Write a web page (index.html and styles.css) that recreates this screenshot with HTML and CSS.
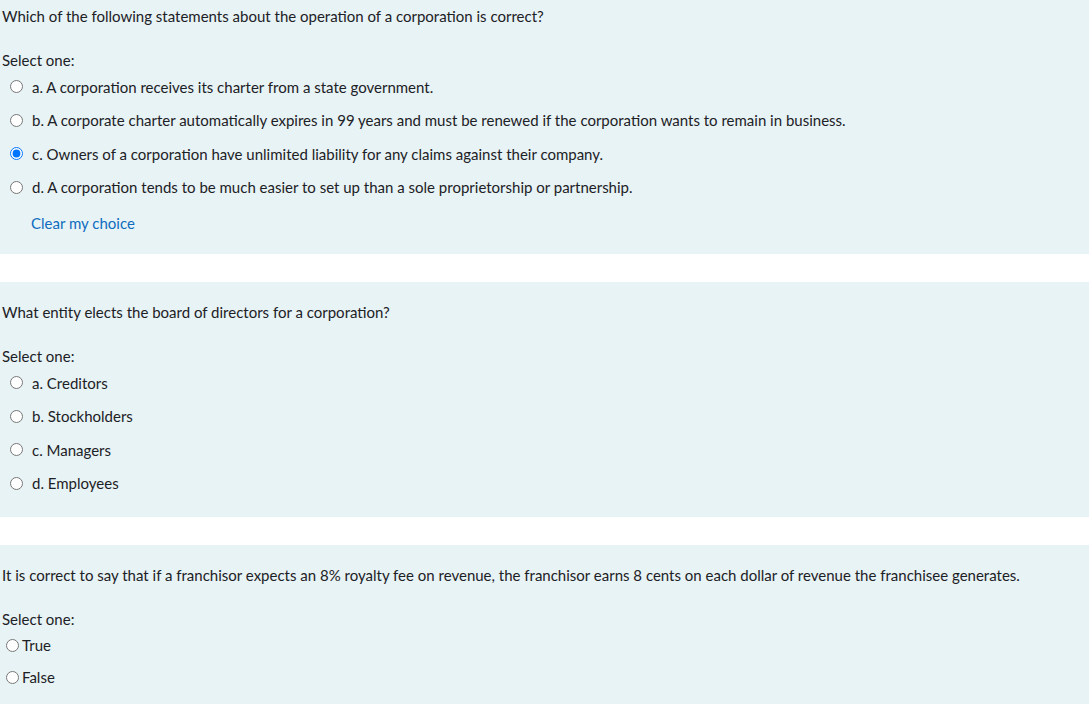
FILE: index.html
```html
<!DOCTYPE html>
<html lang="en">
  <head>
    <meta charset="UTF-8" />
    <meta name="viewport" content="width=device-width, initial-scale=1.0" />
    <title>Quiz</title>
    <link rel="stylesheet" href="styles.css">
  </head>
  <body>
    <div class="quiz">
      <!-- Question 1 -->
      <div class="que first">
        <div class="qtext">Which of the following statements about the operation of a corporation is correct?</div>
        <div class="prompt">Select one:</div>
        <div class="answer">
          <div class="opt">
            <input type="radio" name="q1" id="q1a" />
            <label for="q1a">a. A corporation receives its charter from a state government.</label>
          </div>
          <div class="opt">
            <input type="radio" name="q1" id="q1b" />
            <label for="q1b">b. A corporate charter automatically expires in 99 years and must be renewed if the corporation wants to remain in business.</label>
          </div>
          <div class="opt">
            <input type="radio" name="q1" id="q1c" checked />
            <label for="q1c">c. Owners of a corporation have unlimited liability for any claims against their company.</label>
          </div>
          <div class="opt">
            <input type="radio" name="q1" id="q1d" />
            <label for="q1d">d. A corporation tends to be much easier to set up than a sole proprietorship or partnership.</label>
          </div>
        </div>
        <div class="clear"><a href="#">Clear my choice</a></div>
      </div>

      <!-- Question 2 -->
      <div class="que">
        <div class="qtext">What entity elects the board of directors for a corporation?</div>
        <div class="prompt">Select one:</div>
        <div class="answer">
          <div class="opt">
            <input type="radio" name="q2" id="q2a" />
            <label for="q2a">a. Creditors</label>
          </div>
          <div class="opt">
            <input type="radio" name="q2" id="q2b" />
            <label for="q2b">b. Stockholders</label>
          </div>
          <div class="opt">
            <input type="radio" name="q2" id="q2c" />
            <label for="q2c">c. Managers</label>
          </div>
          <div class="opt">
            <input type="radio" name="q2" id="q2d" />
            <label for="q2d">d. Employees</label>
          </div>
        </div>
      </div>

      <!-- Question 3 -->
      <div class="que">
        <div class="qtext">It is correct to say that if a franchisor expects an 8% royalty fee on revenue, the franchisor earns 8 cents on each dollar of revenue the franchisee generates.</div>
        <div class="prompt">Select one:</div>
        <div class="answer tf">
          <div class="opt">
            <input type="radio" name="q3" id="q3t" />
            <label for="q3t">True</label>
          </div>
          <div class="opt">
            <input type="radio" name="q3" id="q3f" />
            <label for="q3f">False</label>
          </div>
        </div>
      </div>
    </div>
  </body>
</html>
```

FILE: styles.css
```css
/* Reset & Global Styles */
* {
  margin: 0;
  padding: 0;
  box-sizing: border-box;
}

body {
  background: #ffffff;
  color: #1d2125;
  font-family: "Lato", "Liberation Sans", sans-serif;
  font-size: 15px;
  line-height: 22px;
  overflow: hidden;
}

/* Question panels */
.quiz {
  display: flex;
  flex-direction: column;
  gap: 28px;
}

.que {
  background: #e7f3f5;
  padding: 19px 0 17px 2px;
}

.que.first {
  padding-top: 5px;
}

.qtext {
  margin-bottom: 23px;
}

.prompt {
  line-height: 20px;
}

/* Answer options */
.opt {
  display: flex;
  align-items: center;
  padding: 5.75px 0;
}

.opt input {
  width: 13px;
  height: 13px;
  margin: 0 9px 0 8px;
}

.tf .opt {
  padding: 5px 0;
}

.tf .opt input {
  margin: 0 3px 0 4px;
}

/* Clear link */
.clear {
  margin: 8px 0 3px 29px;
}

.clear a {
  color: #0f6cbf;
  text-decoration: none;
}
```
